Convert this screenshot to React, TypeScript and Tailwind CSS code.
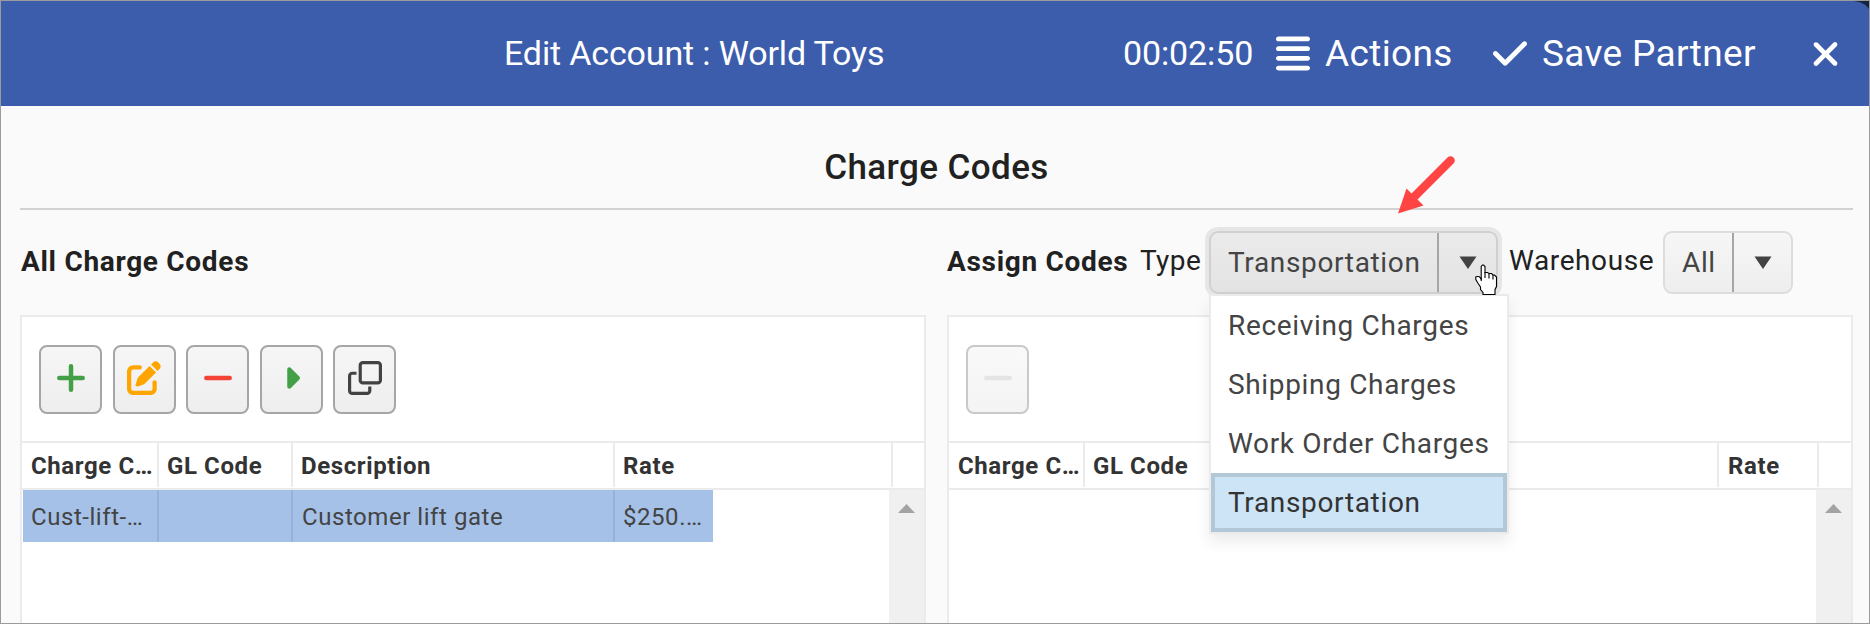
import React, { useState } from "react";
import { twMerge } from "tailwind-merge";
import {
  FaAlignJustify,
  FaCaretRight,
  FaCheck,
  FaPenToSquare,
  FaRegClone,
  FaXmark,
} from "react-icons/fa6";

const chargeTypes = [
  "Receiving Charges",
  "Shipping Charges",
  "Work Order Charges",
  "Transportation",
];

const PlusIcon = () => (
  <svg width="28" height="28" viewBox="0 0 28 28" className="text-[#43a047]">
    <path
      d="M14 2.3v23.4M2.3 14h23.4"
      stroke="currentColor"
      strokeWidth="4.5"
      strokeLinecap="round"
    />
  </svg>
);

const MinusIcon = ({ className }: { className: string }) => (
  <svg width="28" height="28" viewBox="0 0 28 28" className={className}>
    <path
      d="M2.3 14h23.4"
      stroke="currentColor"
      strokeWidth="4.5"
      strokeLinecap="round"
    />
  </svg>
);

const ToolButton = ({
  children,
  disabled = false,
}: {
  children: React.ReactNode;
  disabled?: boolean;
}) => (
  <button
    disabled={disabled}
    className={twMerge(
      "flex h-[69px] w-[63px] items-center justify-center rounded-lg border-2 border-[#a6a6a6] bg-linear-to-b from-[#f6f6f6] to-[#eeeeee] pb-[3px]",
      disabled && "border-[#c9c9c9] from-[#f9f9f9] to-[#f4f4f4]"
    )}
  >
    {children}
  </button>
);

const ComboBox = ({
  value,
  open = false,
  toggle,
}: {
  value: string;
  open?: boolean;
  toggle?: () => void;
}) => (
  <div
    className={twMerge(
      "flex h-[63px] shrink-0 rounded-[9px] border-2 border-[#dddddd] bg-linear-to-b from-[#f6f6f6] to-[#eeeeee] text-[28px] text-[#444444]",
      open
        ? "w-[289px] border-[#d0d0d0] from-[#ebebeb] to-[#e3e3e3] shadow-[0_0_0_4px_#e6e6e6]"
        : "w-[130px]"
    )}
  >
    <span className="grow pl-[17px] leading-[60px] tracking-[0.65px] whitespace-nowrap">
      {value}
    </span>
    <button
      onClick={toggle}
      className="flex h-[59px] w-[59px] shrink-0 items-center border-l-2 border-[#a6a6a6] pl-[20px]"
    >
      <svg width="18" height="13" viewBox="0 0 18 13">
        <path d="M0.5 0.5h17l-8.5 12.5z" fill="#424242" />
      </svg>
    </button>
  </div>
);

const HeaderCell = ({ className, children }: any) => (
  <div
    className={twMerge(
      "h-11 shrink-0 border-r-2 border-[#ebebeb] pl-2 leading-[46px] tracking-[0.6px] whitespace-nowrap",
      className
    )}
  >
    {children}
  </div>
);

const ScrollBar = () => (
  <div className="flex w-[35px] shrink-0 justify-center bg-[#f0f0f0] pt-[14px]">
    <svg width="17" height="9" viewBox="0 0 17 9">
      <path d="M0 9L8.5 0L17 9z" fill="#a3a3a3" />
    </svg>
  </div>
);

const HandCursor = () => (
  <svg
    width="23"
    height="32"
    viewBox="0 0 23 32"
    className="absolute top-[33px] left-[266px] z-20"
  >
    <path
      d="M8 30.5V28.5L5.5 25.5V23L3.5 20L0.8 15.5V13L2.5 12.5H4L6.2 15V2.5L7.5 1H8.5L10 2.5V8.5H12.5L14 9.5H16.5L18 11H19.5L21.5 13V22.5L20 25.5V30.5z"
      fill="white"
      stroke="black"
      strokeWidth="1.1"
    />
    <path
      d="M6.2 14v3M10 8v6M14 9.5v5M18 11v4.5"
      stroke="black"
      strokeWidth="1.1"
    />
  </svg>
);

const App = () => {
  const [isOpen, setIsOpen] = useState(true);
  const [type, setType] = useState("Transportation");

  return (
    <div className="relative h-[624px] w-[1870px] overflow-hidden border border-[#9b9b9b] bg-[#14233f] font-['Roboto',sans-serif] text-[#212121]">
      <header className="-mr-1 flex h-[105px] items-center rounded-tr-[20px] bg-[#3c5cac] text-white">
        <h1 className="ml-[503px] w-[617px] shrink-0 pb-[2px] text-[34px] leading-[40px] tracking-[-0.15px] whitespace-nowrap">
          Edit Account : World Toys
        </h1>
        <span className="w-[155px] shrink-0 pb-px pl-[2px] text-[34px] leading-[40px] tracking-[-0.12px]">
          00:02:50
        </span>
        <button className="flex w-[217px] shrink-0 items-center gap-[15px] text-[37px] leading-[44px] tracking-[0.35px] whitespace-nowrap">
          <FaAlignJustify className="h-[39px] w-[34px]" />
          <span className="pt-px">Actions</span>
        </button>
        <button className="flex w-[318px] shrink-0 items-center gap-[15px] text-[37px] leading-[44px] tracking-[0.35px] whitespace-nowrap">
          <FaCheck className="h-[39px] w-[34px]" />
          <span className="pt-px">Save Partner</span>
        </button>
        <button>
          <FaXmark className="h-[38px] w-[29px]" />
        </button>
      </header>

      <main className="h-[517px] bg-[#fafafa] px-[19px] pr-[16px]">
        <h2 className="flex h-[104px] items-center justify-center border-b-2 border-[#d2d2d2] pt-[23px] text-[35px] font-medium tracking-[0.4px]">
          Charge Codes
        </h2>

        <div className="flex gap-[21px]">
          <section className="w-[906px]">
            <h3 className="h-[105px] pl-px text-[28px] leading-[104px] font-bold tracking-[0.7px]">
              All Charge Codes
            </h3>
            <div className="h-[320px] border-2 border-[#ebebeb] bg-white">
              <div className="flex h-[126px] gap-[10.5px] border-b-2 border-[#ebebeb] pt-7 pl-[17px]">
                <ToolButton>
                  <PlusIcon />
                </ToolButton>
                <ToolButton>
                  <FaPenToSquare className="size-[34px] text-[#ffa500]" />
                </ToolButton>
                <ToolButton>
                  <MinusIcon className="text-[#f44336]" />
                </ToolButton>
                <ToolButton>
                  <FaCaretRight className="h-[34px] w-[17px] text-[#43a047]" />
                </ToolButton>
                <ToolButton>
                  <FaRegClone className="size-[34px] text-[#424242]" />
                </ToolButton>
              </div>
              <div className="flex h-[47px] border-b-2 border-[#ebebeb] pl-px text-[24px] font-bold text-[#333333]">
                <HeaderCell className="w-[136px]">Charge C…</HeaderCell>
                <HeaderCell className="w-[134px]">GL Code</HeaderCell>
                <HeaderCell className="w-[322px]">Description</HeaderCell>
                <HeaderCell className="w-[278px]">Rate</HeaderCell>
              </div>
              <div className="flex h-[143px] justify-between pl-px">
                <div className="flex h-[52px] bg-[#a5c1e8] text-[24px] leading-[54px] tracking-[0.55px] whitespace-nowrap text-[#444444]">
                  <div className="w-[136px] border-r-2 border-[#97b0dc] pl-2">
                    Cust-lift-…
                  </div>
                  <div className="w-[134px] border-r-2 border-[#97b0dc]" />
                  <div className="w-[322px] border-r-2 border-[#97b0dc] pl-[9px]">
                    Customer lift gate
                  </div>
                  <div className="w-[98px] pl-2">$250.…</div>
                </div>
                <ScrollBar />
              </div>
            </div>
          </section>

          <section className="w-[906px]">
            <div className="flex h-[105px] items-center">
              <h3 className="w-[193px] shrink-0 pb-px text-[28px] font-bold tracking-[0.7px] whitespace-nowrap">
                Assign Codes
              </h3>
              <span className="w-[69px] shrink-0 pb-[4px] text-[28px] tracking-[0.4px]">
                Type
              </span>
              <div className="relative">
                <ComboBox
                  value={type}
                  open={isOpen}
                  toggle={() => setIsOpen(!isOpen)}
                />
                {isOpen && (
                  <ul className="absolute top-[63px] left-0 z-10 w-[300px] border-2 border-[#ebebeb] bg-white text-[28px] tracking-[0.66px] text-[#444444] shadow-[0_8px_14px_rgba(0,0,0,0.08)]">
                    {chargeTypes.map((item) => (
                      <li
                        key={item}
                        onClick={() => setType(item)}
                        className={twMerge(
                          "h-[59px] pl-[17px] leading-[60px] whitespace-nowrap",
                          item === type &&
                            "bg-[#cce4f6] text-[#333333] shadow-[inset_0_0_0_4px_#b2c8d7]"
                        )}
                      >
                        {item}
                      </li>
                    ))}
                  </ul>
                )}
                <HandCursor />
              </div>
              <span className="w-[165px] shrink-0 pb-[4px] pl-[11px] text-[28px] tracking-[0.6px]">
                Warehouse
              </span>
              <ComboBox value="All" />
            </div>
            <div className="h-[320px] border-2 border-[#ebebeb] bg-white">
              <div className="flex h-[126px] border-b-2 border-[#ebebeb] pt-7 pl-[17px]">
                <ToolButton disabled>
                  <MinusIcon className="text-[#e4e4e4]" />
                </ToolButton>
              </div>
              <div className="flex h-[47px] border-b-2 border-[#ebebeb] text-[24px] font-bold text-[#333333]">
                <HeaderCell className="w-[136px] pl-[9px]">
                  Charge C…
                </HeaderCell>
                <HeaderCell className="w-[134px]">GL Code</HeaderCell>
                <HeaderCell className="w-[500px]" />
                <HeaderCell className="w-[100px] pl-[9px]">Rate</HeaderCell>
              </div>
              <div className="flex h-[143px] justify-end">
                <ScrollBar />
              </div>
            </div>
          </section>
        </div>
      </main>

      {/* callout arrow pointing at the type dropdown */}
      <svg
        width="62"
        height="62"
        viewBox="0 0 62 62"
        className="absolute top-[153px] left-[1394px]"
      >
        <path
          d="M55.5 6.5L17 45"
          stroke="#ff4444"
          strokeWidth="8.5"
          strokeLinecap="round"
        />
        <path d="M3 59.5L11.5 34.5L28.5 51.5z" fill="#ff4444" />
      </svg>
    </div>
  );
};

export default App;
